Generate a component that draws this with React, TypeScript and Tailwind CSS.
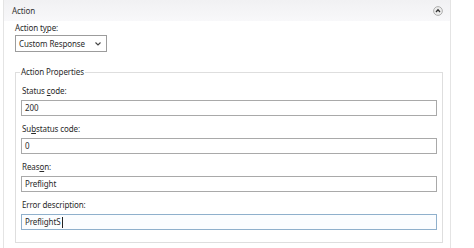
import React from "react";

const font = { fontFamily: '"Segoe UI", "Noto Sans", "Liberation Sans", sans-serif' };

function U({ children }: { children: React.ReactNode }) {
  return <span className="underline underline-offset-1">{children}</span>;
}

function Field({
  label,
  value,
  focused,
}: {
  label: React.ReactNode;
  value: string;
  focused?: boolean;
}) {
  return (
    <div className="flex flex-col">
      <div className="h-[12px] leading-[12px] pl-[1px]">{label}</div>
      <div
        className={
          "mt-[3px] h-[16px] flex items-center pl-[3px] border " +
          (focused ? "border-[#8fb0cc] bg-[#fbfdff]" : "border-[#a9a9a9] bg-white")
        }
      >
        <span className="leading-[12px]">{value}</span>
        {focused && <span className="ml-[1px] w-px h-[11px] bg-[#222]" />}
      </div>
    </div>
  );
}

export default function App() {
  return (
    <div
      className="w-[474px] h-[248px] bg-white overflow-hidden text-[8px] tracking-[-0.1px] text-[#2a2a2a]"
      style={font}
    >
      <div className="ml-[3px] w-[448px] h-full border-l border-r border-[#e4e4e4] flex flex-col">
        {/* Header */}
        <div className="h-[21px] shrink-0 flex items-center justify-between pl-[8px] pr-[7px] bg-gradient-to-b from-[#f1f1f3] to-[#f8f8fa]">
          <span className="text-[#333]">Action</span>
          <svg width="10" height="10" viewBox="0 0 10 10">
            <circle cx="5" cy="5" r="4.4" fill="#ececec" stroke="#a8a8a8" strokeWidth="0.9" />
            <path d="M3 6 L5 3.8 L7 6" fill="none" stroke="#333" strokeWidth="1.3" />
          </svg>
        </div>

        {/* Body */}
        <div className="pl-[11px] pr-[7px] pt-[1px] flex flex-col">
          <div className="h-[12px] leading-[12px]">
            Action t<U>y</U>pe:
          </div>
          <div className="mt-[1px] w-[92px] h-[17px] border border-[#9c9c9c] flex items-center justify-between pl-[3px] pr-[5px]">
            <span>Custom Response</span>
            <svg width="6" height="4" viewBox="0 0 6 4">
              <path d="M0.5 0.5 L3 3 L5.5 0.5" fill="none" stroke="#444" strokeWidth="1.1" />
            </svg>
          </div>

          <fieldset className="mt-[14px] border border-[#dedede] px-[5px] pb-[14px] pt-[7px] h-[177px]">
            <legend className="-ml-[1px] px-[1px] leading-[12px]">Action Properties</legend>
            <div className="flex flex-col gap-[7px]">
              <Field
                label={
                  <>
                    Status <U>c</U>ode:
                  </>
                }
                value="200"
              />
              <Field
                label={
                  <>
                    Su<U>b</U>status code:
                  </>
                }
                value="0"
              />
              <Field
                label={
                  <>
                    Reas<U>o</U>n:
                  </>
                }
                value="Preflight"
              />
              <Field label="Error description:" value="PreflightS" focused />
            </div>
          </fieldset>
        </div>
      </div>
    </div>
  );
}
